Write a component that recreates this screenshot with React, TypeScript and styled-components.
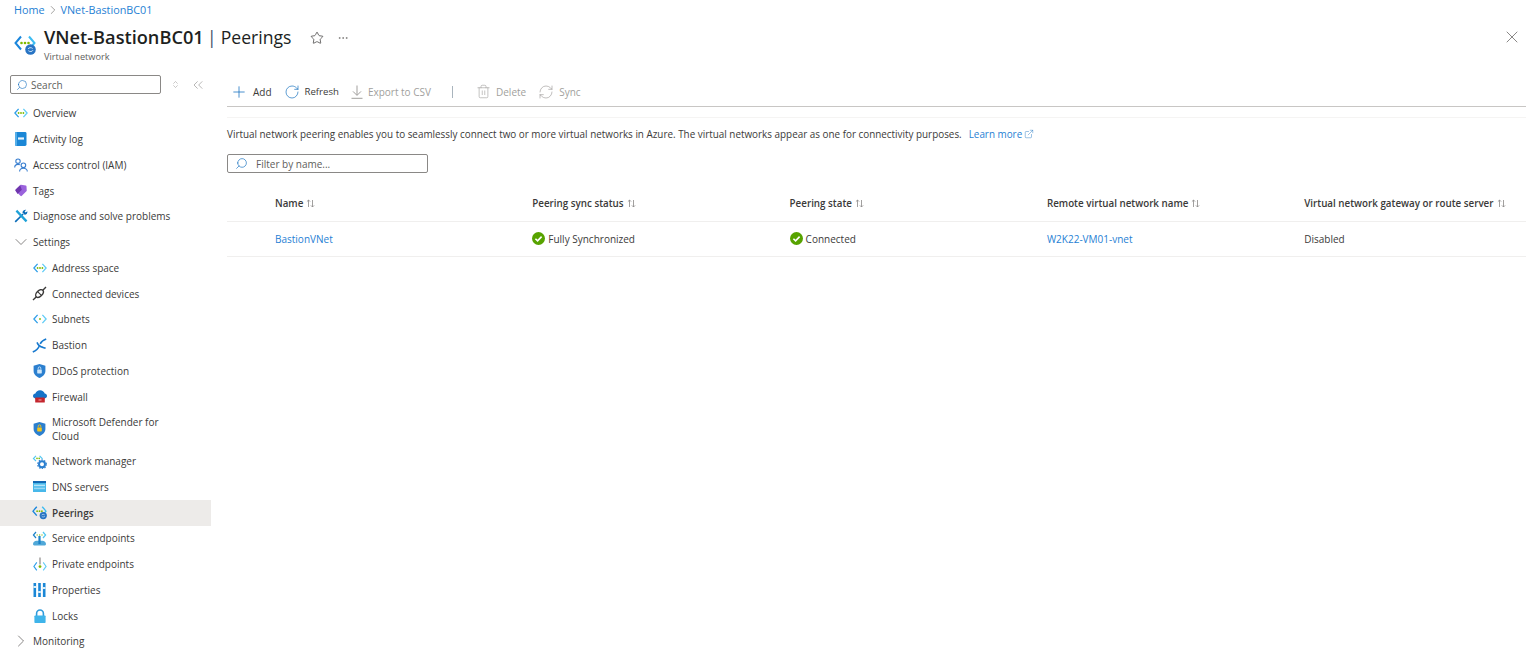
import React from "react"
import styled, { createGlobalStyle } from "styled-components"
import { Plus, RotateCw, Trash2, RefreshCw, Star, X, Search, ChevronDown, ChevronRight, ChevronsLeft, ChevronsUpDown, Ellipsis, ExternalLink } from "lucide-react"

const GlobalStyle = createGlobalStyle`
  html, body {
    margin: 0;
    padding: 0;
    background: #fff;
    font-family: "Open Sans", "Liberation Sans", sans-serif;
    font-size: 10px;
    color: #3b3a39;
    overflow: hidden;
  }
  * { box-sizing: border-box; }
`

/* drawn icons */
const Brackets = ({ dots = 3 }: { dots?: number }) => (
  <svg width="14" height="10" viewBox="0 0 14 10" fill="none">
    <path d="M4.6 .9.9 5l3.7 4.1" stroke="#2f9fe8" strokeWidth="1.3" />
    <path d="M9.4 .9 13.1 5 9.4 9.1" stroke="#62cdf6" strokeWidth="1.3" />
    {dots === 3 && <circle cx="4.6" cy="5" r=".9" fill="#7fba00" />}
    <circle cx="7" cy="5" r=".9" fill="#7fba00" />
    {dots === 3 && <circle cx="9.4" cy="5" r=".9" fill="#7fba00" />}
  </svg>
)

const PeeringBadge = ({ size = 22 }: { size?: number }) => (
  <svg width={size} height={size} viewBox="0 0 22 20" fill="none">
    <path d="M7 1.5 1.5 8 7 14.5" stroke="#1a86dc" strokeWidth="2" />
    <path d="M15 1.5 20.5 8 15 14.5" stroke="#3cbcf2" strokeWidth="2" />
    <circle cx="7.5" cy="8" r="1.3" fill="#7fba00" />
    <circle cx="11" cy="8" r="1.3" fill="#7fba00" />
    <circle cx="14.5" cy="8" r="1.3" fill="#7fba00" />
    <circle cx="16.5" cy="14.5" r="5.3" fill="#2874c4" />
    <path d="M14 14c.6-1.5 3.4-1.8 4.6-.5M19 15.2c-.6 1.5-3.4 1.8-4.6.5" stroke="#cfe6f8" strokeWidth="1" />
  </svg>
)

const ActivityLog = () => (
  <svg width="12" height="14" viewBox="0 0 12 14">
    <rect width="11.5" height="14" rx="1.4" fill="#1b87d6" />
    <rect width="2" height="14" rx="1" fill="#55aee8" />
    <rect x="3" y="5.4" width="6" height="2.2" fill="#e8f4fc" />
  </svg>
)

const People = () => (
  <svg width="14" height="14" viewBox="0 0 14 14" fill="none" stroke="#3a7fd0" strokeWidth="1.1">
    <circle cx="4" cy="3.2" r="2.2" />
    <path d="M.7 9.6c0-2 1.4-3.2 3.3-3.2 .7 0 1.3.1 1.8.4" />
    <circle cx="9.4" cy="7.3" r="2.3" />
    <path d="M5.6 13.6c0-2 1.6-3.3 3.8-3.3s3.9 1.3 3.9 3.3" />
  </svg>
)

const Tag = () => (
  <svg width="12" height="13" viewBox="0 0 14 14">
    <path d="M.8 5.8 6 .8c.3-.3.6-.4 1-.4l5.5.7c.5.1.9.5.9 1l.3 4.8c0 .4-.1.7-.4 1l-5.3 5.3c-.5.5-1.2.5-1.7 0L.8 7.5c-.5-.5-.5-1.2 0-1.7z" fill="#9a62dc" />
    <path d="M.8 5.8 6 .8 8 6 3 11.2 .8 7.5c-.5-.5-.5-1.2 0-1.7z" fill="#6f36ad" />
  </svg>
)

const Tools = () => (
  <svg width="14" height="14" viewBox="0 0 14 14">
    <path d="M1.8 13.4.6 12.2 8.6 4.4l1.1 1.2z" fill="#0b6cb8" />
    <path d="M3.2.8 13.4 11.4l-1.7 1.8L1.6 2.4z" fill="#1fa2d8" />
    <path d="M8.4 3.4c.2-1.7 2-3 3.8-2.7L10.6 2.4l1 1.2 1.8-1.4c.3 1.8-1 3.4-2.7 3.6z" fill="#0b6cb8" />
  </svg>
)

const Plug = () => (
  <svg width="15" height="15" viewBox="0 0 15 15" fill="none" stroke="#3b3a39" strokeWidth="1.4">
    <path d="M1 14l3.4-3.2M10.8 4.2 14 1" />
    <ellipse cx="7.5" cy="7.5" rx="2.8" ry="4.6" transform="rotate(45 7.5 7.5)" />
    <path d="M5.6 5.6 9.4 9.4" strokeWidth="1.1" />
  </svg>
)

const BastionIcon = () => (
  <svg width="15" height="15" viewBox="0 0 15 15" fill="none" stroke="#1779cf" strokeWidth="1.6">
    <path d="M.8 14C4 12.6 6 11.2 7.2 8.2" />
    <path d="M14.2 1C11.4 2 9.4 3.4 8.2 5.8" />
    <path d="M5 4.4c1 2.4 3 4.4 6 5l2.6 .9" />
  </svg>
)

const Shield = ({ fill, inner }: { fill: string; inner: string }) => (
  <svg width="13" height="14" viewBox="0 0 13 14">
    <path d="M6.5 0 12.4 1.8v5.2c0 3.2-2.6 5.6-5.9 7C3.2 12.6.6 10.2.6 7V1.8z" fill={fill} />
    <rect x="4.2" y="5.4" width="4.6" height="4" rx=".6" fill={inner} />
    <path d="M5.2 5.4V4.2a1.3 1.3 0 0 1 2.6 0v1.2" stroke={inner} strokeWidth=".9" fill="none" />
  </svg>
)

const FirewallIcon = () => (
  <svg width="14" height="13" viewBox="0 0 14 13">
    <path d="M3 8.6C1.2 8.6 0 7.5 0 6.1s1-2.4 2.4-2.5C2.9 1.5 4.8.2 7 .2c2.3 0 4.2 1.3 4.7 3.4 1.3.2 2.3 1.2 2.3 2.5s-1.2 2.5-3 2.5z" fill="#1673c8" />
    <rect x="2.2" y="7.6" width="9.6" height="5" rx=".6" fill="#c4262e" />
    <path d="M5.5 10h3" stroke="#f3b9bc" strokeWidth=".9" />
  </svg>
)

const ManagerIcon = () => (
  <svg width="15" height="15" viewBox="0 0 15 15">
    <path d="M3.6 1.4.6 4.4l3 3 .8-.8-2.2-2.2 2.2-2.2z" fill="#50c7f0" />
    <path d="M8 1.4l3 3-1 .8-2.8-3z" fill="#50c7f0" />
    <circle cx="5" cy="4.4" r=".8" fill="#7fba00" />
    <circle cx="7.2" cy="4.4" r=".8" fill="#7fba00" />
    <circle cx="10" cy="10.3" r="3" fill="none" stroke="#2b7fcf" strokeWidth="2" />
    <circle cx="10" cy="10.3" r="4.4" fill="none" stroke="#2b7fcf" strokeWidth="1.1" strokeDasharray="1.4 1.4" />
  </svg>
)

const DnsIcon = () => (
  <svg width="13" height="11" viewBox="0 0 13 11">
    <rect width="13" height="11" fill="#48b8ea" />
    <rect width="13" height="2" fill="#1469b4" />
    <rect x="1" y="3.6" width="11" height="1.6" fill="#b6e4f8" />
    <rect x="1" y="6.6" width="11" height="1.6" fill="#9ad8f4" />
  </svg>
)

const ServiceIcon = () => (
  <svg width="15" height="15" viewBox="0 0 15 15" fill="none">
    <path d="M1 13c0-1.8 1.6-3 3.6-3.2h5.8c2 .2 3.6 1.4 3.6 3.2 0 1-1 1.6-2 1.6H3c-1 0-2-.6-2-1.6z" fill="#50a8d8" />
    <path d="M4 1 1.4 4 4 7" stroke="#1c82c8" strokeWidth="1.2" />
    <path d="M11 1l2.6 3L11 7" stroke="#50c7f0" strokeWidth="1.2" />
    <path d="M7.5 5v8" stroke="#1c82c8" strokeWidth="2.2" />
    <path d="M4.6 4h6" stroke="#7fba00" strokeWidth="1.1" strokeDasharray="1.2 1.2" />
  </svg>
)

const PrivateIcon = () => (
  <svg width="14" height="15" viewBox="0 0 14 15" fill="none">
    <path d="M3.8 5.4 .9 9.4l2.9 4" stroke="#2f9fe8" strokeWidth="1.1" />
    <path d="M10.2 5.4l2.9 4-2.9 4" stroke="#62cdf6" strokeWidth="1.1" />
    <path d="M7 .6v7" stroke="#8a8886" strokeWidth="1.2" />
    <circle cx="7" cy="9.6" r="1.4" fill="#7fba00" />
  </svg>
)

const PropertiesIcon = () => (
  <svg width="13" height="14" viewBox="0 0 13 14">
    <rect x=".5" width="2.6" height="14" fill="#1b87d6" />
    <rect x="5.2" width="2.6" height="14" fill="#1b87d6" />
    <rect x="9.9" width="2.6" height="14" fill="#1b87d6" />
    <rect x=".5" y="3" width="2.6" height="2" fill="#d8effb" />
    <rect x="5.2" y="8" width="2.6" height="2" fill="#d8effb" />
    <rect x="9.9" y="4" width="2.6" height="2" fill="#d8effb" />
  </svg>
)

const LockIcon = () => (
  <svg width="12" height="14" viewBox="0 0 12 14">
    <path d="M2.6 7V4.4a3.4 3.4 0 0 1 6.8 0V7" stroke="#2f9bdc" strokeWidth="1.6" fill="none" />
    <rect x=".4" y="6.4" width="11.2" height="7.6" rx=".8" fill="#3fb4ea" />
  </svg>
)

const CheckBadge = () => (
  <svg width="13" height="13" viewBox="0 0 13 13">
    <circle cx="6.5" cy="6.5" r="6.5" fill="#57a300" />
    <path d="M3.4 6.7 5.6 8.9 9.6 4.6" stroke="#fff" strokeWidth="1.6" fill="none" />
  </svg>
)

const ExportIcon = () => (
  <svg width="12" height="14" viewBox="0 0 12 14" fill="none" stroke="#a19f9d" strokeWidth="1">
    <path d="M6 .5v9.6M2 6.4l4 4 4-4M.5 13.3h11" />
  </svg>
)

interface NavEntry {
  label: string
  icon?: React.ReactNode
  nested?: boolean
  group?: "open" | "closed"
  active?: boolean
}

const navData: NavEntry[] = [
  { label: "Overview", icon: <Brackets /> },
  { label: "Activity log", icon: <ActivityLog /> },
  { label: "Access control (IAM)", icon: <People /> },
  { label: "Tags", icon: <Tag /> },
  { label: "Diagnose and solve problems", icon: <Tools /> },
  { label: "Settings", group: "open" },
  { label: "Address space", icon: <Brackets />, nested: true },
  { label: "Connected devices", icon: <Plug />, nested: true },
  { label: "Subnets", icon: <Brackets dots={1} />, nested: true },
  { label: "Bastion", icon: <BastionIcon />, nested: true },
  { label: "DDoS protection", icon: <Shield fill="#2b7fcf" inner="#cfe6f8" />, nested: true },
  { label: "Firewall", icon: <FirewallIcon />, nested: true },
  { label: "Microsoft Defender for Cloud", icon: <Shield fill="#2b7fcf" inner="#f5c518" />, nested: true },
  { label: "Network manager", icon: <ManagerIcon />, nested: true },
  { label: "DNS servers", icon: <DnsIcon />, nested: true },
  { label: "Peerings", icon: <PeeringBadge size={15} />, nested: true, active: true },
  { label: "Service endpoints", icon: <ServiceIcon />, nested: true },
  { label: "Private endpoints", icon: <PrivateIcon />, nested: true },
  { label: "Properties", icon: <PropertiesIcon />, nested: true },
  { label: "Locks", icon: <LockIcon />, nested: true },
  { label: "Monitoring", group: "closed" },
]

const columns = [
  "Name",
  "Peering sync status",
  "Peering state",
  "Remote virtual network name",
  "Virtual network gateway or route server",
]

const App = () => {
  return (
    <Page>
      <GlobalStyle />
      <Breadcrumb>
        <CrumbLink>Home</CrumbLink>
        <ChevronRight size={14} strokeWidth={1} color="#605e5c" />
        <CrumbLink>VNet-BastionBC01</CrumbLink>
      </Breadcrumb>
      <TitleBar>
        <PeeringBadge />
        <TitleText>
          <TitleRow>
            <Title>
              VNet-BastionBC01<TitleSep>|</TitleSep><TitleLight>Peerings</TitleLight>
            </Title>
            <TitleActions>
              <Star size={14} strokeWidth={1.2} color="#323130" />
              <Ellipsis size={12} strokeWidth={1.2} color="#605e5c" />
            </TitleActions>
          </TitleRow>
          <Subtitle>Virtual network</Subtitle>
        </TitleText>
        <CloseButton>
          <X size={20} strokeWidth={0.9} color="#605e5c" />
        </CloseButton>
      </TitleBar>
      <Body>
        <Sidebar>
          <SearchRow>
            <SearchBox>
              <MirroredSearch size={12} strokeWidth={1.2} color="#0f6cbd" />
              <span>Search</span>
            </SearchBox>
            <ChevronsUpDown size={9} strokeWidth={1.2} color="#8a8886" />
            <ChevronsLeft size={16} strokeWidth={0.9} color="#8a8886" />
          </SearchRow>
          <NavList>
            {navData.map(entry => (
              <NavItem key={entry.label} $nested={entry.nested} $active={entry.active}>
                <NavIcon>
                  {entry.group === "open" && <ChevronDown size={20} strokeWidth={0.9} color="#605e5c" />}
                  {entry.group === "closed" && <ChevronRight size={20} strokeWidth={0.9} color="#605e5c" />}
                  {entry.icon}
                </NavIcon>
                <NavLabel>{entry.label}</NavLabel>
              </NavItem>
            ))}
          </NavList>
        </Sidebar>
        <Main>
          <Toolbar>
            <ToolButton>
              <Plus size={18} strokeWidth={1} color="#0f6cbd" />
              Add
            </ToolButton>
            <ToolButton>
              <RotateCw size={16} strokeWidth={1} color="#0f6cbd" />
              <RefreshLabel>Refresh</RefreshLabel>
            </ToolButton>
            <ToolButton $disabled>
              <ExportIcon />
              Export to CSV
            </ToolButton>
            <ToolSep />
            <ToolButton $disabled>
              <Trash2 size={15} strokeWidth={1} color="#a19f9d" />
              Delete
            </ToolButton>
            <ToolButton $disabled>
              <RefreshCw size={16} strokeWidth={1} color="#a19f9d" />
              Sync
            </ToolButton>
          </Toolbar>
          <ToolbarRule />
          <Description>
            Virtual network peering enables you to seamlessly connect two or more virtual networks in Azure. The virtual networks appear as one for connectivity purposes.
            <LearnMore>
              Learn more
              <ExternalLink size={10} strokeWidth={1} color="#0f6cbd" />
            </LearnMore>
          </Description>
          <FilterBox>
            <MirroredSearch size={13} strokeWidth={1.2} color="#0f6cbd" />
            <span>Filter by name...</span>
          </FilterBox>
          <Table>
            <HeadRow>
              {columns.map(col => (
                <HeadCell key={col}>
                  {col}
                  <SortIcon viewBox="0 0 9 9" fill="none" stroke="#8a8886" strokeWidth="0.8">
                    <path d="M2.5 8V1M.9 2.6l1.6-1.6 1.6 1.6M6.5 1v7M4.9 6.4l1.6 1.6 1.6-1.6" />
                  </SortIcon>
                </HeadCell>
              ))}
            </HeadRow>
            <BodyRow>
              <Cell><CellLink>BastionVNet</CellLink></Cell>
              <Cell><CheckBadge />Fully Synchronized</Cell>
              <Cell><CheckBadge />Connected</Cell>
              <Cell><CellLink>W2K22-VM01-vnet</CellLink></Cell>
              <Cell>Disabled</Cell>
            </BodyRow>
          </Table>
        </Main>
      </Body>
    </Page>
  )
}

const Page = styled.div`
  width: 1536px;
  height: 661px;
  display: flex;
  flex-direction: column;
  overflow: hidden;
`

const Breadcrumb = styled.nav`
  height: 19px;
  padding-left: 14px;
  display: flex;
  align-items: center;
  gap: 1px;
`

const CrumbLink = styled.a`
  color: #1f7fd4;
  font-size: 10.8px;
`

const TitleBar = styled.header`
  height: 52px;
  padding: 0 14px 0 14px;
  display: flex;
  align-items: center;
  gap: 8px;
`

const TitleText = styled.div`
  flex: 1;
  margin-top: -2px;
  display: flex;
  flex-direction: column;
`

const TitleRow = styled.div`
  display: flex;
  align-items: center;
  gap: 19px;
`

const Title = styled.h1`
  margin: 0;
  font-size: 18.2px;
  line-height: 25px;
  font-weight: 600;
  color: #201f1e;
`

const TitleSep = styled.span`
  margin: 0 4px 0 3px;
  font-weight: 400;
  color: #44546a;
`

const TitleLight = styled.span`
  font-weight: 400;
  font-size: 17.6px;
`

const TitleActions = styled.div`
  display: flex;
  align-items: center;
  gap: 13px;
`

const Subtitle = styled.div`
  font-size: 9.2px;
  line-height: 13px;
  color: #605e5c;
`

const CloseButton = styled.div`
  display: flex;
  margin-bottom: 17px;
`

const Body = styled.div`
  flex: 1;
  display: flex;
  min-height: 0;
`

const Sidebar = styled.aside`
  width: 211px;
  flex: none;
`

const SearchRow = styled.div`
  height: 29.5px;
  padding: 4px 0 6.5px 10px;
  display: flex;
  align-items: center;
  gap: 10px;
  svg { flex: none; }
`

const SearchBox = styled.div`
  width: 151px;
  height: 19px;
  padding-left: 5px;
  display: flex;
  align-items: center;
  gap: 3px;
  border: 1px solid #8a8886;
  border-radius: 2px;
  color: #605e5c;
`

const MirroredSearch = styled(Search)`
  flex: none;
  transform: scaleX(-1);
`

const NavList = styled.ul`
  margin: 0;
  padding: 0;
  list-style: none;
`

const NavItem = styled.li<{ $nested?: boolean; $active?: boolean }>`
  min-height: 25.75px;
  padding: ${p => (p.$nested ? "0 40px 0 32px" : "0 12px 0 13px")};
  display: flex;
  align-items: center;
  gap: 5px;
  background: ${p => (p.$active ? "#edebe9" : "transparent")};
  font-weight: ${p => (p.$active ? 600 : 400)};
`

const NavIcon = styled.span`
  width: 15px;
  flex: none;
  display: flex;
  align-items: center;
  justify-content: center;
  svg { flex: none; }
`

const NavLabel = styled.span`
  padding: 5.4px 0;
  line-height: 14px;
`

const Main = styled.main`
  flex: 1;
  padding: 0 10px 0 16px;
  display: flex;
  flex-direction: column;
  min-width: 0;
`

const Toolbar = styled.div`
  height: 36px;
  padding: 6px 0 0 3px;
  display: flex;
  align-items: center;
  gap: 12px;
  border-bottom: 1px solid #c8c6c4;
`

const ToolbarRule = styled.div`
  height: 1px;
  margin-top: 10px;
  background: #f5f4f3;
`

const ToolButton = styled.div<{ $disabled?: boolean }>`
  display: flex;
  align-items: center;
  gap: 5px;
  color: ${p => (p.$disabled ? "#a19f9d" : "#3b3a39")};
  svg { flex: none; }
`

const RefreshLabel = styled.span`
  font-size: 9.6px;
`

const ToolSep = styled.div`
  width: 1px;
  height: 12px;
  margin: 0 11px 0 9px;
  background: #a9b4bd;
`

const Description = styled.p`
  margin: 9px 0 0;
  font-size: 9.9px;
  line-height: 14px;
  display: flex;
  align-items: center;
`

const LearnMore = styled.a`
  margin-left: 7px;
  display: inline-flex;
  align-items: center;
  gap: 2px;
  color: #1f7fd4;
`

const FilterBox = styled.div`
  width: 201px;
  height: 19px;
  margin-top: 13px;
  padding-left: 7px;
  display: flex;
  align-items: center;
  gap: 8px;
  border: 1px solid #8a8886;
  border-radius: 2px;
  color: #605e5c;
`

const Table = styled.div`
  margin-top: 13px;
`

const HeadRow = styled.div`
  height: 36px;
  padding: 0 0 1px 48px;
  display: grid;
  grid-template-columns: repeat(5, 257.3px);
  align-items: center;
  border-bottom: 1px solid #f0efee;
  font-size: 9.8px;
  font-weight: 600;
`

const HeadCell = styled.div`
  display: flex;
  align-items: center;
  gap: 3px;
`

const SortIcon = styled.svg`
  width: 9px;
  height: 9px;
`

const BodyRow = styled.div`
  height: 35px;
  padding: 0 0 1px 48px;
  display: grid;
  grid-template-columns: repeat(5, 257.3px);
  align-items: center;
  border-bottom: 1px solid #f0efee;
`

const Cell = styled.div`
  display: flex;
  align-items: center;
  gap: 3px;
`

const CellLink = styled.a`
  color: #1f7fd4;
`

export default App
